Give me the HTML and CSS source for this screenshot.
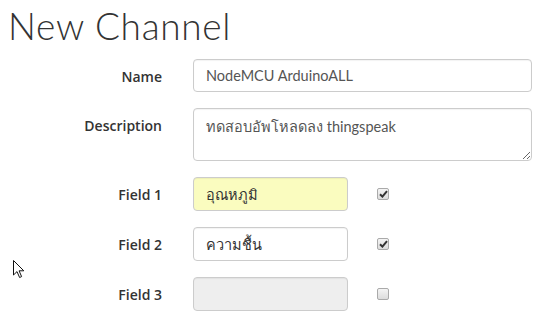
FILE: index.html
```html
<!DOCTYPE html>
<html lang="th">
<head>
    <meta charset="UTF-8">
    <meta name="viewport" content="width=device-width, initial-scale=1.0">
    <title>New Channel</title>
    <link rel="stylesheet" href="styles.css">
</head>
<body>

    <h1 class="page-title">New Channel</h1>

    <!-- Channel settings form -->
    <form class="channel-form">
        <label class="form-label" for="name">Name</label>
        <div class="form-control-wrap">
            <input id="name" class="form-input" type="text" value="NodeMCU ArduinoALL">
        </div>

        <label class="form-label" for="desc">Description</label>
        <div class="form-control-wrap">
            <textarea id="desc" class="form-input form-textarea">ทดสอบอัพโหลดลง thingspeak</textarea>
        </div>

        <label class="form-label" for="f1">Field 1</label>
        <div class="field-row">
            <input id="f1" class="form-input field-input highlight" type="text" value="อุณหภูมิ">
            <span class="check on">
                <svg width="9" height="8" viewBox="0 0 9 8"><path d="M1 4.2 L3.4 6.6 L8 1.2" fill="none" stroke="#333" stroke-width="2"/></svg>
            </span>
        </div>

        <label class="form-label" for="f2">Field 2</label>
        <div class="field-row">
            <input id="f2" class="form-input field-input" type="text" value="ความชื้น">
            <span class="check on">
                <svg width="9" height="8" viewBox="0 0 9 8"><path d="M1 4.2 L3.4 6.6 L8 1.2" fill="none" stroke="#333" stroke-width="2"/></svg>
            </span>
        </div>

        <label class="form-label" for="f3">Field 3</label>
        <div class="field-row">
            <input id="f3" class="form-input field-input" type="text" disabled>
            <span class="check"></span>
        </div>
    </form>

    <!-- Mouse pointer -->
    <svg class="pointer" width="14" height="20" viewBox="0 0 14 20">
        <path d="M1.5 1.5 L1.5 16 L5 12.6 L7.6 18.5 L9.6 17.6 L7.1 11.8 L11.8 11.8 Z" fill="#fff" stroke="#111" stroke-width="1"/>
    </svg>

</body>
</html>
```

FILE: styles.css
```css
/* Page base */
body {
    margin: 0;
    font-family: Lato, "Open Sans", sans-serif;
    color: #333;
    background-color: #fff;
    position: relative;
}

/* Heading */
.page-title {
    font-family: Lato, sans-serif;
    font-weight: 300;
    font-size: 37px;
    letter-spacing: 0.7px;
    color: #333;
    margin: 0;
    padding: 6px 0 0 8px;
    line-height: 40px;
}

/* Two column form: labels on the left, controls on the right */
.channel-form {
    display: grid;
    grid-template-columns: 162px 339px;
    column-gap: 31px;
    row-gap: 16px;
    margin-top: 13px;
}

.form-label {
    text-align: right;
    font-family: "Open Sans", sans-serif;
    font-weight: 600;
    font-size: 14px;
    padding-top: 8px;
    color: #333;
}

.form-input {
    box-sizing: border-box;
    width: 100%;
    height: 33px;
    border: 1px solid #ccc;
    border-radius: 4px;
    padding: 6px 12px;
    font-family: Lato, "Open Sans", sans-serif;
    font-size: 14.5px;
    color: #555;
    background-color: #fff;
    box-shadow: inset 0 1px 1px rgba(0, 0, 0, 0.05);
}

.form-textarea {
    display: block;
    height: 53px;
    resize: vertical;
    padding-top: 6px;
}

/* Field rows with checkbox */
.field-row {
    display: flex;
    align-items: center;
    gap: 29px;
}

.field-input {
    width: 155px;
    height: 34px;
    color: #333;
}

.highlight {
    background-color: #fafcbf;
}

.field-input:disabled {
    background-color: #eee;
}

.check {
    box-sizing: border-box;
    width: 12px;
    height: 12px;
    border: 1px solid #aaa;
    border-radius: 2px;
    background: linear-gradient(#f4f4f4, #dcdcdc);
    display: flex;
    align-items: center;
    justify-content: center;
}

/* Mouse pointer drawn over the page */
.pointer {
    position: absolute;
    left: 12px;
    top: 259px;
}
```
